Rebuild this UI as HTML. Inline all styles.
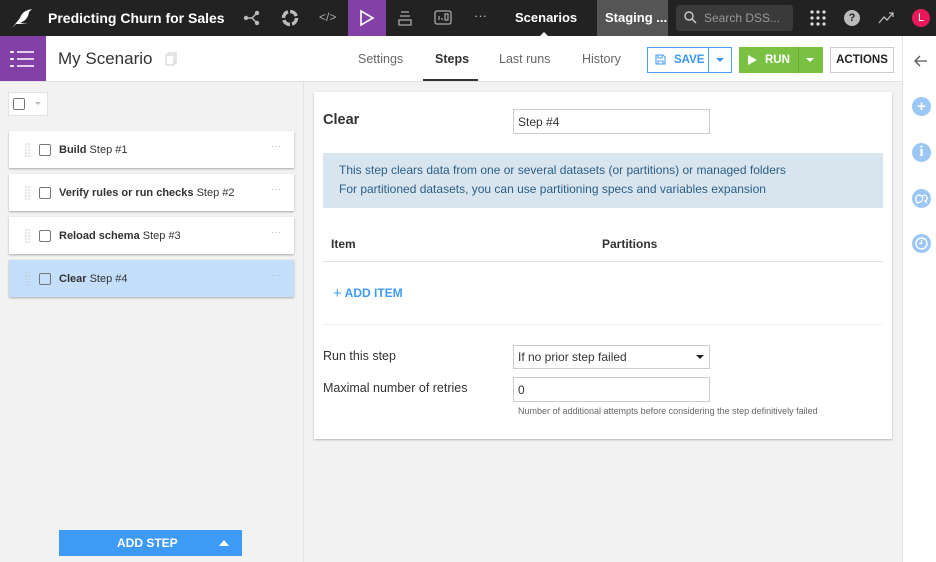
<!DOCTYPE html>
<html><head><style>
*{box-sizing:border-box;margin:0;padding:0}
body{width:936px;height:562px;overflow:hidden;background:#f2f2f2;font-family:"Liberation Sans",sans-serif;color:#333;position:relative}
.abs{position:absolute}
.top{left:0;top:0;width:936px;height:36px;background:#222}
.bar2{left:0;top:36px;width:902px;height:46px;background:#fff;border-bottom:1px solid #e2e2e2}
.tab{font-size:12.5px;color:#666;top:52px}
.card{background:#fff;box-shadow:0 1px 2px rgba(0,0,0,.25)}
.step{left:9px;width:285px;height:37px;background:#fff;box-shadow:0 1px 2px rgba(0,0,0,.3);font-size:11px}
.step .grip{position:absolute;left:16px;top:12px}
.step .cb{position:absolute;left:30px;top:13px;width:12px;height:12px;border:1.5px solid #777;border-radius:2px}
.step .lb{position:absolute;left:50px;top:13px}
.step .dots{position:absolute;right:13px;top:10px;color:#bbb;font-size:10px}
.inp{border:1px solid #ccc;background:#fff;font-size:12px;padding:0 4px;display:flex;align-items:center}
.sc{width:19px;height:19px;border-radius:50%;background:#9cc7f5;left:912px;color:#fff;font-size:15px;text-align:center;line-height:19px;font-weight:bold}
</style></head><body>
<div class="abs top"></div>
<svg class="abs" style="left:10px;top:6px" width="24" height="24" viewBox="0 0 24 24"><path d="M2 22 L10 12 Q12 6 18 4 L22 3 L19 6 Q18 14 10 17 L18 18 L6 18 Z" fill="#fff"/></svg>
<div class="abs" style="left:48px;top:10px;color:#fff;font-weight:bold;font-size:14px">Predicting Churn for Sales</div>
<svg class="abs" style="left:243px;top:10px" width="18" height="16"><circle cx="3" cy="8" r="2.2" fill="#bbb"/><circle cx="14" cy="3" r="2.2" fill="#bbb"/><circle cx="14" cy="13" r="2.2" fill="#bbb"/><path d="M3 8 H9 L14 3 M9 8 L14 13" stroke="#bbb" stroke-width="1.5" fill="none"/></svg>
<svg class="abs" style="left:281px;top:9px" width="18" height="18"><circle cx="9" cy="9" r="6.5" stroke="#bbb" stroke-width="3.5" fill="none" stroke-dasharray="8 2.2"/></svg>
<div class="abs" style="left:319px;top:10px;color:#aaa;font-size:12px">&lt;/&gt;</div>
<div class="abs" style="left:348px;top:0;width:38px;height:36px;background:#8341a8"></div>
<svg class="abs" style="left:359px;top:9px" width="16" height="18"><path d="M2 2 L14 9 L2 16 Z" stroke="#fff" stroke-width="1.6" fill="none"/></svg>
<svg class="abs" style="left:397px;top:9px" width="16" height="18"><path d="M4 3 H12 M3 7 H13 M2 11 H14 V16 H2 Z" stroke="#aaa" stroke-width="1.3" fill="none"/></svg>
<svg class="abs" style="left:434px;top:10px" width="18" height="15"><rect x="1" y="1" width="16" height="13" rx="2" stroke="#aaa" stroke-width="1.3" fill="none"/><path d="M5 10 V6 M8 10 V8 M11 4 H14 V10 H11 Z" stroke="#aaa" stroke-width="1.2" fill="none"/></svg>
<div class="abs" style="left:474px;top:8px;color:#bbb;font-size:13px">···</div>
<div class="abs" style="left:515px;top:10px;color:#fff;font-weight:bold;font-size:13px">Scenarios</div>
<div class="abs" style="left:540px;top:32px;width:0;height:0;border:4px solid transparent;border-bottom-color:#fff;border-top:0"></div>
<div class="abs" style="left:597px;top:0;width:71px;height:36px;background:#555"></div>
<div class="abs" style="left:605px;top:10px;color:#fff;font-weight:bold;font-size:13px">Staging ...</div>
<div class="abs" style="left:676px;top:5px;width:117px;height:26px;background:#3a3a3a;border-radius:3px"></div>
<svg class="abs" style="left:684px;top:11px" width="13" height="13"><circle cx="5" cy="5" r="4" stroke="#ccc" stroke-width="1.4" fill="none"/><path d="M8 8 L12 12" stroke="#ccc" stroke-width="1.5"/></svg>
<div class="abs" style="left:704px;top:11px;color:#999;font-size:12px">Search DSS...</div>
<svg class="abs" style="left:810px;top:10px" width="16" height="16"><g fill="#ddd"><circle cx="2" cy="2" r="1.6"/><circle cx="8" cy="2" r="1.6"/><circle cx="14" cy="2" r="1.6"/><circle cx="2" cy="8" r="1.6"/><circle cx="8" cy="8" r="1.6"/><circle cx="14" cy="8" r="1.6"/><circle cx="2" cy="14" r="1.6"/><circle cx="8" cy="14" r="1.6"/><circle cx="14" cy="14" r="1.6"/></g></svg>
<div class="abs" style="left:844px;top:10px;width:16px;height:16px;border-radius:50%;background:#bbb;color:#222;font-size:11px;font-weight:bold;text-align:center;line-height:16px">?</div>
<svg class="abs" style="left:878px;top:10px" width="17" height="15"><path d="M1 13 L6 7 L9 10 L15 3 M11 3 H15 V7" stroke="#bbb" stroke-width="1.3" fill="none"/></svg>
<div class="abs" style="left:912px;top:9px;width:18px;height:18px;border-radius:50%;background:#e8195a;color:#fff;font-size:11px;text-align:center;line-height:18px">L</div>

<div class="abs bar2"></div>
<div class="abs" style="left:0;top:36px;width:46px;height:45px;background:#8341a8"></div>
<svg class="abs" style="left:10px;top:50px" width="25" height="18"><g stroke="#fff" stroke-width="1.6"><path d="M7 2 H24 M7 9 H24 M7 16 H24"/><path d="M1 2 H3 M1 9 H3 M1 16 H3" stroke-linecap="round" stroke-width="2"/></g></svg>
<div class="abs" style="left:58px;top:49px;font-size:17px;color:#333">My Scenario</div>
<svg class="abs" style="left:165px;top:52px" width="12" height="14"><rect x="3" y="1" width="8" height="10" stroke="#ccc" fill="none"/><rect x="1" y="3" width="8" height="10" stroke="#ccc" fill="#fff"/></svg>
<div class="abs tab" style="left:358px">Settings</div>
<div class="abs tab" style="left:435px;color:#333;font-weight:bold">Steps</div>
<div class="abs" style="left:423px;top:79px;width:55px;height:2px;background:#333"></div>
<div class="abs tab" style="left:499px">Last runs</div>
<div class="abs tab" style="left:582px">History</div>
<div class="abs" style="left:647px;top:47px;width:85px;height:26px;border:1px solid #4a9ff5;background:#fff"></div>
<div class="abs" style="left:708px;top:47px;width:1px;height:26px;background:#4a9ff5"></div>
<svg class="abs" style="left:655px;top:54px" width="11" height="11"><path d="M1 1 H8 L10 3 V10 H1 Z M3 1 V4 H7 V1 M3 10 V7 H8 V10" stroke="#4a9ff5" stroke-width="1.1" fill="none"/></svg>
<div class="abs" style="left:674px;top:54px;color:#3a95f0;font-weight:bold;font-size:11.5px">SAVE</div>
<div class="abs" style="left:716px;top:58px;border:4px solid transparent;border-top:4px solid #3a95f0;border-bottom:0"></div>
<div class="abs" style="left:739px;top:47px;width:84px;height:26px;background:#7ac143"></div>
<div class="abs" style="left:798px;top:47px;width:1px;height:26px;background:#6aaa38"></div>
<svg class="abs" style="left:747px;top:54px" width="11" height="12"><path d="M1 1 L10 6 L1 11 Z" fill="#fff"/></svg>
<div class="abs" style="left:765px;top:54px;color:#fff;font-weight:bold;font-size:11.5px">RUN</div>
<div class="abs" style="left:806px;top:58px;border:4px solid transparent;border-top:4px solid #fff;border-bottom:0"></div>
<div class="abs" style="left:830px;top:47px;width:64px;height:26px;border:1px solid #ccc;background:#fff;font-size:11.5px;font-weight:bold;color:#222;text-align:center;line-height:24px">ACTIONS</div>

<div class="abs" style="left:902px;top:36px;width:34px;height:526px;background:#fff;border-left:1px solid #e5e5e5"></div>
<svg class="abs" style="left:914px;top:55px" width="14" height="12"><path d="M13 6 H2 M6 1 L1 6 L6 11" stroke="#555" stroke-width="1.3" fill="none"/></svg>
<div class="abs sc" style="top:97px">+</div>
<div class="abs sc" style="top:143px;font-family:'Liberation Serif',serif">i</div>
<svg class="abs" style="left:912px;top:189px" width="19" height="19"><circle cx="9.5" cy="9.5" r="9.5" fill="#9cc7f5"/><path d="M4 11 A3.5 3.5 0 1 1 8 13 L5 14 Z M10 7 A3 3 0 1 1 13 12 L15 14" stroke="#fff" stroke-width="1.3" fill="none"/></svg>
<svg class="abs" style="left:912px;top:234px" width="19" height="19"><circle cx="9.5" cy="9.5" r="9.5" fill="#9cc7f5"/><circle cx="9.5" cy="9.5" r="5.5" stroke="#fff" stroke-width="1.4" fill="none"/><path d="M9.5 6 V9.5 H7" stroke="#fff" stroke-width="1.3" fill="none"/></svg>

<div class="abs" style="left:303px;top:82px;width:1px;height:480px;background:#e2e2e2"></div>
<div class="abs" style="left:8px;top:92px;width:40px;height:24px;background:#fff;border:1px solid #e2e2e2"></div>
<div class="abs" style="left:13px;top:98px;width:12px;height:12px;border:1.5px solid #777;border-radius:2px"></div>
<div class="abs" style="left:35px;top:102px;border:3px solid transparent;border-top:3px solid #bbb;border-bottom:0"></div>

<svg width="0" height="0" style="position:absolute"><defs><g id="gr" fill="#c8c8c8"><circle cx="1" cy="1" r=".8"/><circle cx="4" cy="1" r=".8"/><circle cx="1" cy="4" r=".8"/><circle cx="4" cy="4" r=".8"/><circle cx="1" cy="7" r=".8"/><circle cx="4" cy="7" r=".8"/><circle cx="1" cy="10" r=".8"/><circle cx="4" cy="10" r=".8"/><circle cx="1" cy="13" r=".8"/><circle cx="4" cy="13" r=".8"/></g></defs></svg>
<div class="abs step" style="top:131px"><svg class="grip" width="5" height="14"><use href="#gr"/></svg><div class="cb"></div><div class="lb"><b>Build</b> Step #1</div><div class="dots">···</div></div>
<div class="abs step" style="top:174px"><svg class="grip" width="5" height="14"><use href="#gr"/></svg><div class="cb"></div><div class="lb"><b>Verify rules or run checks</b> Step #2</div><div class="dots">···</div></div>
<div class="abs step" style="top:217px"><svg class="grip" width="5" height="14"><use href="#gr"/></svg><div class="cb"></div><div class="lb"><b>Reload schema</b> Step #3</div><div class="dots">···</div></div>
<div class="abs step" style="top:260px;background:#c3dffb"><svg class="grip" width="5" height="14"><use href="#gr"/></svg><div class="cb"></div><div class="lb"><b>Clear</b> Step #4</div><div class="dots">···</div></div>

<div class="abs" style="left:59px;top:530px;width:183px;height:26px;background:#3d9bf7;color:#fff;font-weight:bold;font-size:12px;line-height:26px;padding-left:58px">ADD STEP</div>
<div class="abs" style="left:219px;top:540px;border:5px solid transparent;border-bottom:6px solid #fff;border-top:0"></div>

<div class="abs card" style="left:314px;top:92px;width:578px;height:347px"></div>
<div class="abs" style="left:323px;top:112px;font-size:14.5px;font-weight:bold;color:#333">Clear</div>
<div class="abs inp" style="left:513px;top:109px;width:197px;height:25px">Step #4</div>
<div class="abs" style="left:323px;top:153px;width:560px;height:55px;background:#d9e5ee;color:#2a5e87;font-size:12px;line-height:19px;padding:8px 0 0 16px">This step clears data from one or several datasets (or partitions) or managed folders<br>For partitioned datasets, you can use partitioning specs and variables expansion</div>
<div class="abs" style="left:331px;top:237px;font-size:12px;font-weight:bold;color:#333">Item</div>
<div class="abs" style="left:602px;top:237px;font-size:12px;font-weight:bold;color:#333">Partitions</div>
<div class="abs" style="left:323px;top:261px;width:560px;height:1px;background:#e0e0e0"></div>
<div class="abs" style="left:333px;top:284px;color:#3d9bf7;font-size:12px;font-weight:bold"><span style="font-weight:normal;font-size:15px;position:relative;top:1px">+</span> ADD ITEM</div>
<div class="abs" style="left:323px;top:324px;width:560px;height:1px;background:#eee"></div>
<div class="abs" style="left:323px;top:349px;font-size:12.5px">Run this step</div>
<div class="abs inp" style="left:513px;top:345px;width:197px;height:24px">If no prior step failed</div>
<div class="abs" style="left:696px;top:355px;border:4px solid transparent;border-top:4px solid #222;border-bottom:0"></div>
<div class="abs" style="left:323px;top:381px;font-size:12.5px">Maximal number of retries</div>
<div class="abs inp" style="left:513px;top:377px;width:197px;height:25px">0</div>
<div class="abs" style="left:518px;top:406px;font-size:9px;color:#666">Number of additional attempts before considering the step definitively failed</div>
</body></html>
